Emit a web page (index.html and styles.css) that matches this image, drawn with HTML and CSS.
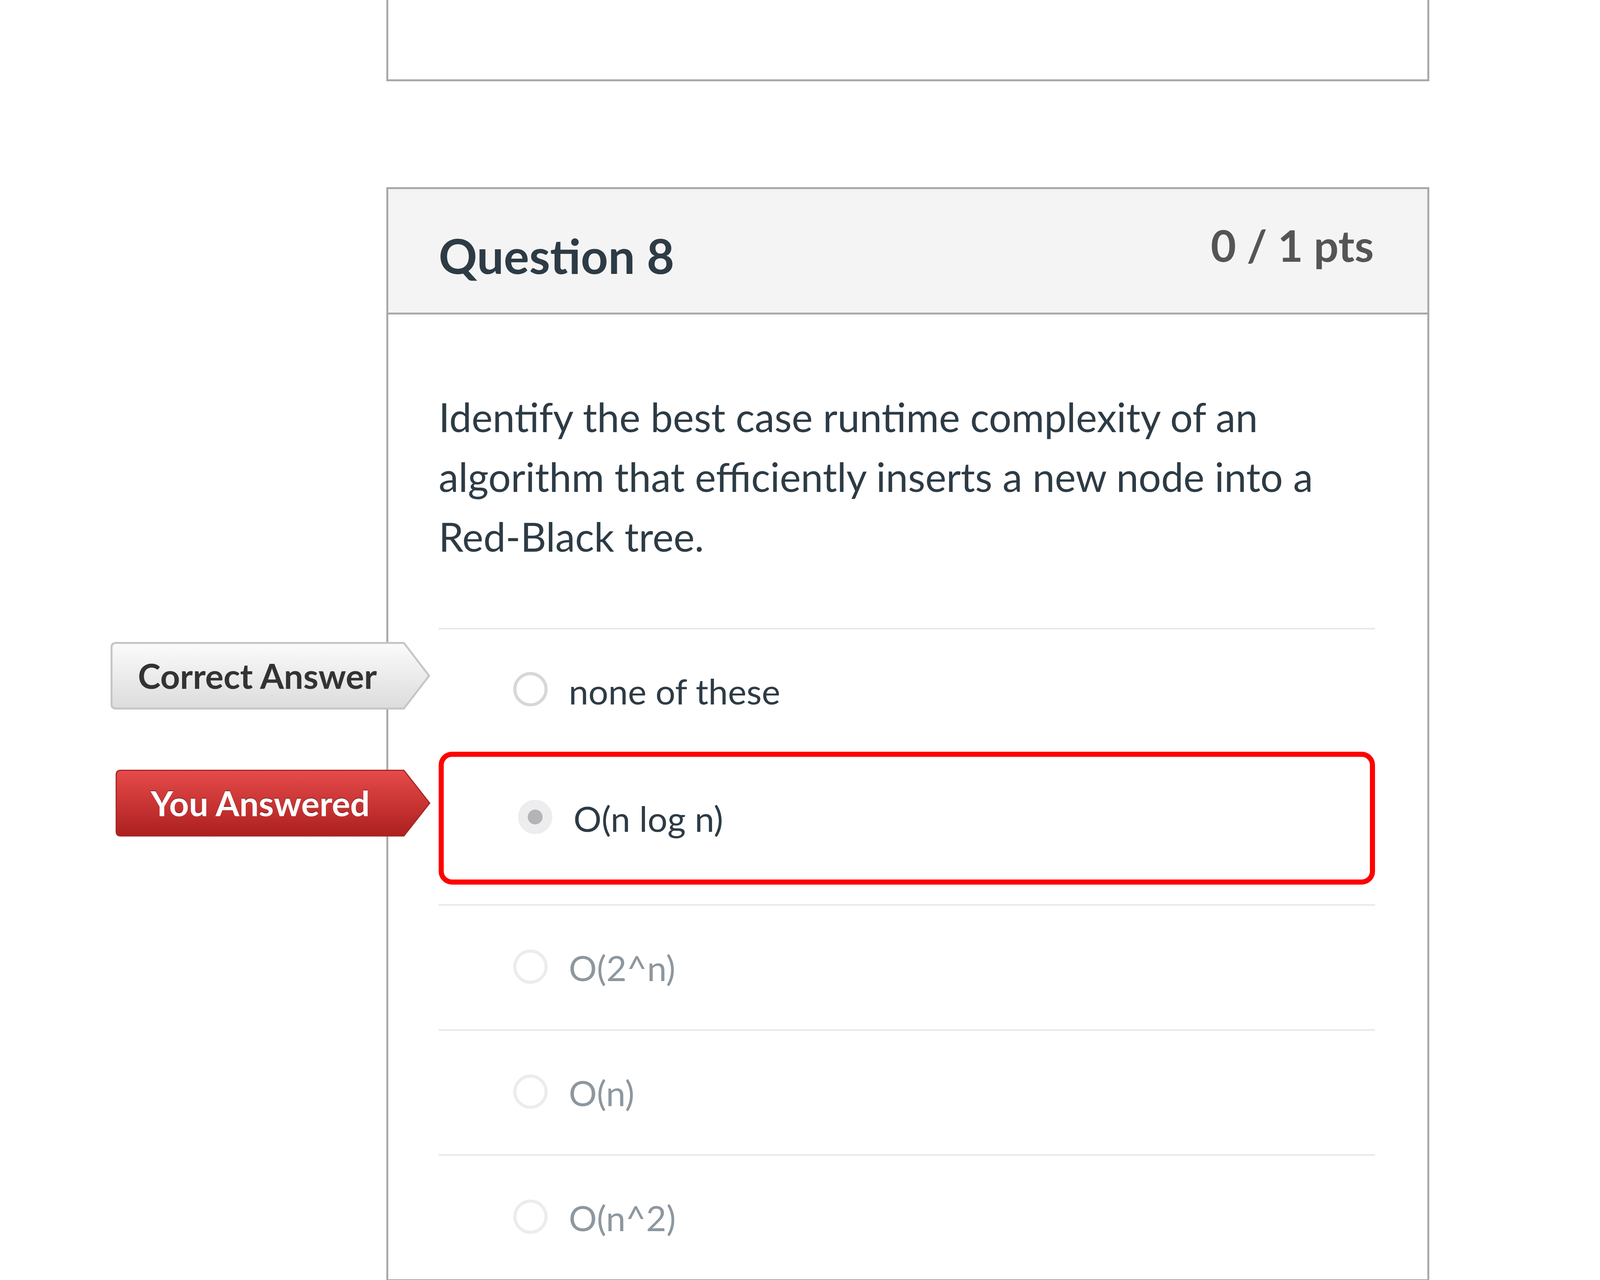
FILE: index.html
```html
<!DOCTYPE html>
<html lang="en">
<head>
<meta charset="utf-8">
<title>Question 8</title>
<link rel="stylesheet" href="styles.css">
</head>
<body>
<div class="page">
  <div class="prev-box"></div>

  <div class="question">
    <div class="q-header">
      <h2 class="q-title">Question 8</h2>
      <div class="q-points">0 / 1 pts</div>
    </div>
    <div class="q-body">
      <p class="q-text">Identify the best case runtime complexity of an algorithm that efficiently inserts a new node into a Red-Black tree.</p>

      <div class="answers">
        <div class="answer correct">
          <div class="badge badge-correct">
            <svg class="badge-bg" width="819" height="173" viewBox="0 0 819 173">
              <defs>
                <linearGradient id="gGrey" x1="0" y1="0" x2="0" y2="1">
                  <stop offset="0" stop-color="#fbfbfb"/>
                  <stop offset="1" stop-color="#dcdcdc"/>
                </linearGradient>
              </defs>
              <path d="M14 2.5 H751 L815.5 86.5 L751 170.5 H14 Q2.5 170.5 2.5 159 V14 Q2.5 2.5 14 2.5 Z" fill="url(#gGrey)" stroke="#c6c6c6" stroke-width="5"/>
            </svg>
            <span class="badge-text">Correct Answer</span>
          </div>
          <span class="radio"></span>
          <span class="answer-text">none of these</span>
        </div>

        <div class="answer selected">
          <div class="badge badge-wrong">
            <svg class="badge-bg" width="806" height="171" viewBox="0 0 806 171">
              <defs>
                <linearGradient id="gRed" x1="0" y1="0" x2="0" y2="1">
                  <stop offset="0" stop-color="#e54b4a"/>
                  <stop offset="1" stop-color="#ad1f1f"/>
                </linearGradient>
              </defs>
              <path d="M13 1.5 H738 L804 85.5 L738 169.5 H13 Q1.5 169.5 1.5 158 V13 Q1.5 1.5 13 1.5 Z" fill="url(#gRed)" stroke="#a82626" stroke-width="3"/>
            </svg>
            <span class="badge-text">You Answered</span>
          </div>
          <span class="radio radio-checked"><span class="radio-dot"></span></span>
          <span class="answer-text">O(n log n)</span>
        </div>

        <div class="answer disabled">
          <span class="radio"></span>
          <span class="answer-text">O(2^n)</span>
        </div>

        <div class="answer disabled">
          <span class="radio"></span>
          <span class="answer-text">O(n)</span>
        </div>

        <div class="answer disabled">
          <span class="radio"></span>
          <span class="answer-text">O(n^2)</span>
        </div>
      </div>
    </div>
  </div>
</div>
</body>
</html>
```

FILE: styles.css
```css
* {
  box-sizing: border-box;
}

html, body {
  margin: 0;
  padding: 0;
  background: #ffffff;
}

body {
  font-family: Lato, "Open Sans", "Liberation Sans", sans-serif;
  color: #2d3b45;
}

.page {
  width: 2670px;
  margin-left: 989px;
}

.prev-box {
  height: 208px;
  border-left: 5px solid #a9a9a9;
  border-right: 5px solid #a9a9a9;
  border-bottom: 5px solid #a9a9a9;
  background: #ffffff;
}

.question {
  margin-top: 271px;
  border: 5px solid #a9a9a9;
  background: #ffffff;
}

.q-header {
  height: 321px;
  background: #f4f4f4;
  border-bottom: 5px solid #a9a9a9;
  padding: 0 137px 0 129px;
  display: flex;
  justify-content: space-between;
  align-items: flex-start;
}

.q-title {
  margin: 97px 0 0 0;
  font-size: 122px;
  line-height: 1.2;
  font-weight: 700;
  color: #2d3b45;
}

.q-points {
  margin-top: 76px;
  font-size: 112px;
  line-height: 1.2;
  font-weight: 700;
  color: #555555;
}

.q-body {
  padding: 185px 134px 0 129px;
}

.q-text {
  margin: 0 0 158px 0;
  font-size: 102px;
  line-height: 153px;
  color: #2d3b45;
}

.answers {
  display: flex;
  flex-direction: column;
}

.answer {
  position: relative;
  height: 320px;
  border-top: 4px solid #e8e8e8;
  padding-left: 191px;
  display: flex;
  align-items: center;
}

.answer.correct {
  height: 317px;
}

.answer.selected {
  height: 340px;
  border: 13px solid #ff0000;
  border-radius: 34px;
  padding-left: 190px;
  margin-bottom: 50px;
}

.radio {
  flex: none;
  width: 88px;
  height: 88px;
  border-radius: 50%;
  border: 8px solid #ececee;
  background: #ffffff;
  display: flex;
  align-items: center;
  justify-content: center;
}

.correct .radio {
  border-color: #d7d7d9;
  margin-top: -8px;
}

.radio-checked {
  border: none;
  background: #ededef;
  margin-top: -6px;
}

.radio-dot {
  width: 38px;
  height: 38px;
  border-radius: 50%;
  background: #b4b4b8;
}

.answer-text {
  margin-left: 54px;
  font-size: 90px;
  line-height: 1.2;
  color: #2d3b45;
}

.disabled .answer-text {
  color: #8d979f;
}

.disabled .radio {
  margin-top: -4px;
}

.badge {
  position: absolute;
  display: flex;
  align-items: center;
  font-size: 88px;
  line-height: 1.2;
  font-weight: 700;
  z-index: 2;
}

.badge-correct {
  top: 32px;
  right: calc(100% + 21px);
  width: 819px;
  height: 173px;
  padding-left: 70px;
  color: #333333;
}

.badge-wrong {
  top: 33px;
  right: calc(100% + 34px);
  width: 806px;
  height: 171px;
  padding-left: 90px;
  color: #ffffff;
  text-shadow: 0 -2px 0 rgba(0, 0, 0, 0.35);
}

.badge-bg {
  position: absolute;
  left: 0;
  top: 0;
  display: block;
}

.badge-text {
  position: relative;
  white-space: nowrap;
}
```
